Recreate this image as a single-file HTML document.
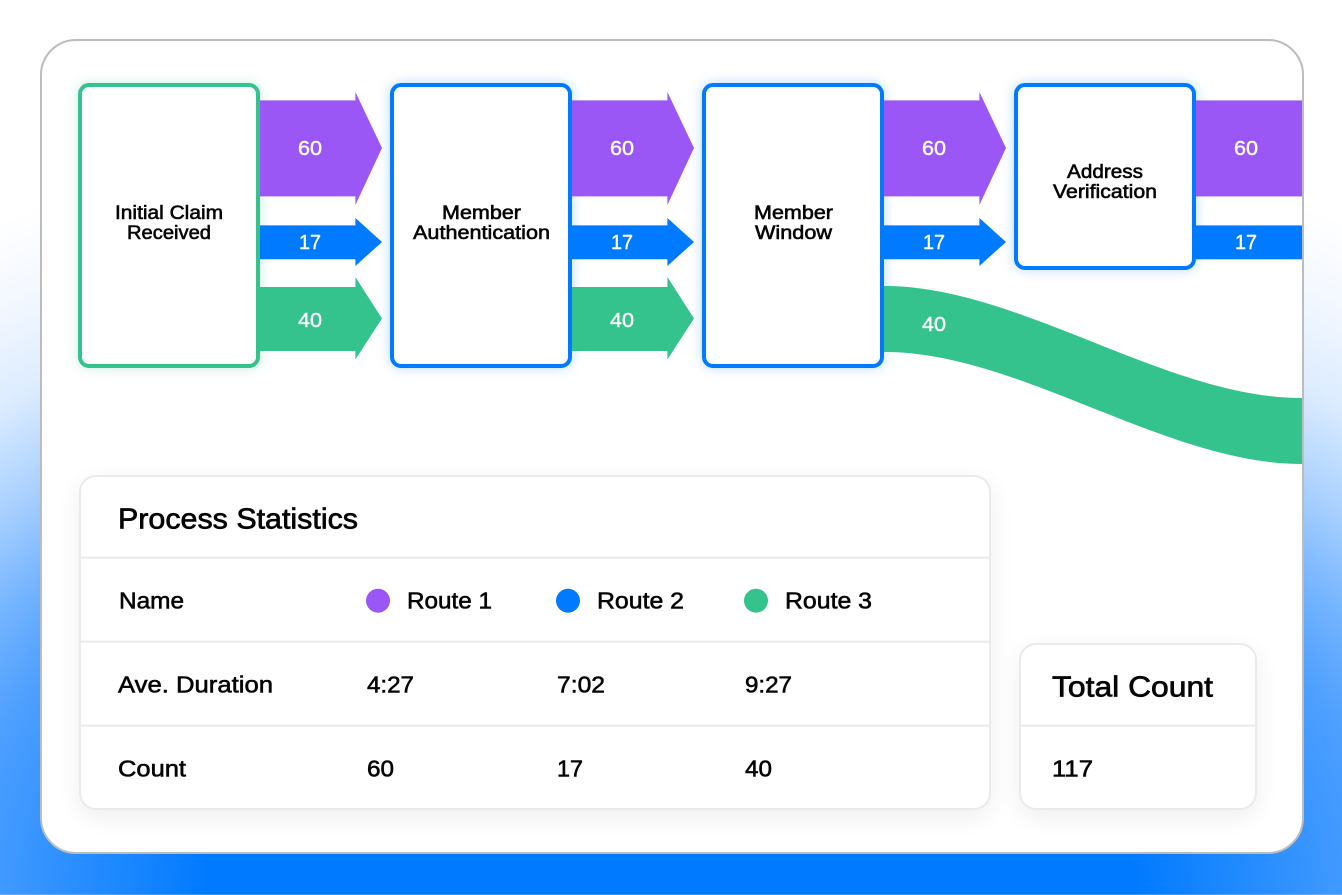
<!DOCTYPE html>
<html lang="en">
<head>
<meta charset="utf-8">
<title>Process Statistics</title>
<style>
html,body{margin:0;padding:0;width:1342px;height:895px;overflow:hidden;background:#fff}
#bg{position:absolute;left:0;top:0;width:1342px;height:895px;
background:radial-gradient(ellipse 1100px 700px at 671px 895px,#007aff 0,#007aff 42%,#3a96ff 59%,#4fa0ff 65.4%,#70b2ff 72%,#a8d0ff 81.6%,#dcecff 92.7%,#f2f7ff 103%,#fff 114%)}
#edge{position:absolute;left:0;top:894px;width:1342px;height:1px;background:rgba(255,255,255,.2)}
#card{position:absolute;left:40px;top:39px;width:1260px;height:811px;border:2px solid #bcbcbc;border-radius:36px;background:#fff}
.box{position:absolute;box-sizing:border-box;width:182px;background:#fff;border:4px solid #007aff;border-radius:11px;box-shadow:0 0 12px rgba(0,122,255,.28)}
.panel{position:absolute;box-sizing:border-box;background:#fff;border:2px solid #eaeaea;border-radius:17px;box-shadow:0 7px 24px rgba(0,0,0,.07)}
svg{position:absolute;left:0;top:0}
text{font-family:"Liberation Sans",sans-serif;fill:#050505;stroke:#050505;stroke-width:.6px}
.w{fill:#fff;stroke:#fff;stroke-width:.4px;font-size:20px}
.l{font-size:19.5px}
.r{font-size:23.5px}
.h{font-size:29px;stroke-width:.7px}
</style>
</head>
<body>
<div id="bg"></div>
<div id="edge"></div>
<div id="card"></div>
<div class="box" style="left:78px;top:83px;height:285px;border-color:#34c38d;box-shadow:0 0 12px rgba(52,195,141,.28)"></div>
<div class="box" style="left:390px;top:83px;height:285px"></div>
<div class="box" style="left:702px;top:83px;height:285px"></div>
<div class="box" style="left:1014px;top:83px;height:187px"></div>
<div class="panel" style="left:79px;top:475px;width:912px;height:335px"></div>
<div class="panel" style="left:1019px;top:643px;width:238px;height:167px"></div>
<svg width="1342" height="895" viewBox="0 0 1342 895" xmlns="http://www.w3.org/2000/svg">
  <!-- Row 1 arrows -->
  <path fill="#9b57f5" d="M260 100.4H355.4V92L382 148L355.4 205V196.4H260Z"/>
  <path fill="#007aff" d="M260 225.4H355.4V218L382 242L355.4 266V259.3H260Z"/>
  <path fill="#34c38d" d="M256 287H355.4V277L382 318.5L355.4 359.5V351H256Z"/>
  <!-- Row 2 arrows -->
  <path fill="#9b57f5" d="M572 100.4H667.4V92L694 148L667.4 205V196.4H572Z"/>
  <path fill="#007aff" d="M570 225.4H667.4V218L694 242L667.4 266V259.3H570Z"/>
  <path fill="#34c38d" d="M572 287H667.4V277L694 318.5L667.4 359.5V351H572Z"/>
  <!-- Row 3 arrows -->
  <path fill="#9b57f5" d="M884 100.4H979.4V92L1006 148L979.4 205V196.4H884Z"/>
  <path fill="#007aff" d="M882 225.4H979.4V218L1006 242L979.4 266V259.3H882Z"/>
  <!-- Cut-off arrows on right -->
  <rect fill="#9b57f5" x="1196" y="100.4" width="106" height="96"/>
  <rect fill="#007aff" x="1194" y="225.4" width="108" height="33.9"/>
  <!-- Green flow -->
  <path fill="#34c38d" d="M884 286C1020 286 1165 398 1302 398V464C1165 464 1020 352 884 352Z"/>

  <!-- Table rules -->
  <rect x="81" y="556.7" width="908" height="2" fill="#eaeaea"/>
  <rect x="81" y="640.7" width="908" height="2" fill="#eaeaea"/>
  <rect x="81" y="724.7" width="908" height="2" fill="#eaeaea"/>
  <rect x="1021" y="724.7" width="234" height="2" fill="#eaeaea"/>
  <circle cx="378" cy="600.7" r="12" fill="#9b57f5"/>
  <circle cx="568" cy="600.7" r="12" fill="#007aff"/>
  <circle cx="756" cy="600.7" r="12" fill="#34c38d"/>

  <!-- Flow numbers -->
  <text class="w" x="298" y="155" textLength="24" lengthAdjust="spacingAndGlyphs">60</text>
  <text class="w" x="299" y="249" textLength="22" lengthAdjust="spacingAndGlyphs">17</text>
  <text class="w" x="298" y="327" textLength="24" lengthAdjust="spacingAndGlyphs">40</text>
  <text class="w" x="610" y="155" textLength="24" lengthAdjust="spacingAndGlyphs">60</text>
  <text class="w" x="611" y="249" textLength="22" lengthAdjust="spacingAndGlyphs">17</text>
  <text class="w" x="610" y="327" textLength="24" lengthAdjust="spacingAndGlyphs">40</text>
  <text class="w" x="922" y="155" textLength="24" lengthAdjust="spacingAndGlyphs">60</text>
  <text class="w" x="923" y="249" textLength="22" lengthAdjust="spacingAndGlyphs">17</text>
  <text class="w" x="922" y="331" textLength="24" lengthAdjust="spacingAndGlyphs">40</text>
  <text class="w" x="1234" y="155" textLength="24" lengthAdjust="spacingAndGlyphs">60</text>
  <text class="w" x="1235" y="249" textLength="22" lengthAdjust="spacingAndGlyphs">17</text>

  <!-- Box labels -->
  <text class="l" x="115" y="219" textLength="108" lengthAdjust="spacingAndGlyphs">Initial Claim</text>
  <text class="l" x="127" y="239" textLength="84" lengthAdjust="spacingAndGlyphs">Received</text>
  <text class="l" x="442" y="219" textLength="79" lengthAdjust="spacingAndGlyphs">Member</text>
  <text class="l" x="413" y="239" textLength="137" lengthAdjust="spacingAndGlyphs">Authentication</text>
  <text class="l" x="754" y="219" textLength="79" lengthAdjust="spacingAndGlyphs">Member</text>
  <text class="l" x="755" y="239" textLength="77" lengthAdjust="spacingAndGlyphs">Window</text>
  <text class="l" x="1067" y="178" textLength="76" lengthAdjust="spacingAndGlyphs">Address</text>
  <text class="l" x="1053" y="198" textLength="104" lengthAdjust="spacingAndGlyphs">Verification</text>

  <!-- Table text -->
  <text class="h" x="118" y="528.3" textLength="240" lengthAdjust="spacingAndGlyphs">Process Statistics</text>
  <text class="r" x="119" y="608.3" textLength="65" lengthAdjust="spacingAndGlyphs">Name</text>
  <text class="r" x="407" y="608.3" textLength="85" lengthAdjust="spacingAndGlyphs">Route 1</text>
  <text class="r" x="597" y="608.3" textLength="87" lengthAdjust="spacingAndGlyphs">Route 2</text>
  <text class="r" x="785" y="608.3" textLength="87" lengthAdjust="spacingAndGlyphs">Route 3</text>
  <text class="r" x="118" y="692.3" textLength="155" lengthAdjust="spacingAndGlyphs">Ave. Duration</text>
  <text class="r" x="367" y="692.3" textLength="47" lengthAdjust="spacingAndGlyphs">4:27</text>
  <text class="r" x="557" y="692.3" textLength="48" lengthAdjust="spacingAndGlyphs">7:02</text>
  <text class="r" x="745" y="692.3" textLength="47" lengthAdjust="spacingAndGlyphs">9:27</text>
  <text class="r" x="118" y="776.3" textLength="68" lengthAdjust="spacingAndGlyphs">Count</text>
  <text class="r" x="367" y="776.3" textLength="27" lengthAdjust="spacingAndGlyphs">60</text>
  <text class="r" x="557" y="776.3" textLength="26" lengthAdjust="spacingAndGlyphs">17</text>
  <text class="r" x="745" y="776.3" textLength="27" lengthAdjust="spacingAndGlyphs">40</text>

  <!-- Total -->
  <text class="h" x="1052" y="696.7" textLength="161" lengthAdjust="spacingAndGlyphs">Total Count</text>
  <text class="r" x="1052" y="776.3" textLength="41" lengthAdjust="spacingAndGlyphs">117</text>
</svg>
</body>
</html>
